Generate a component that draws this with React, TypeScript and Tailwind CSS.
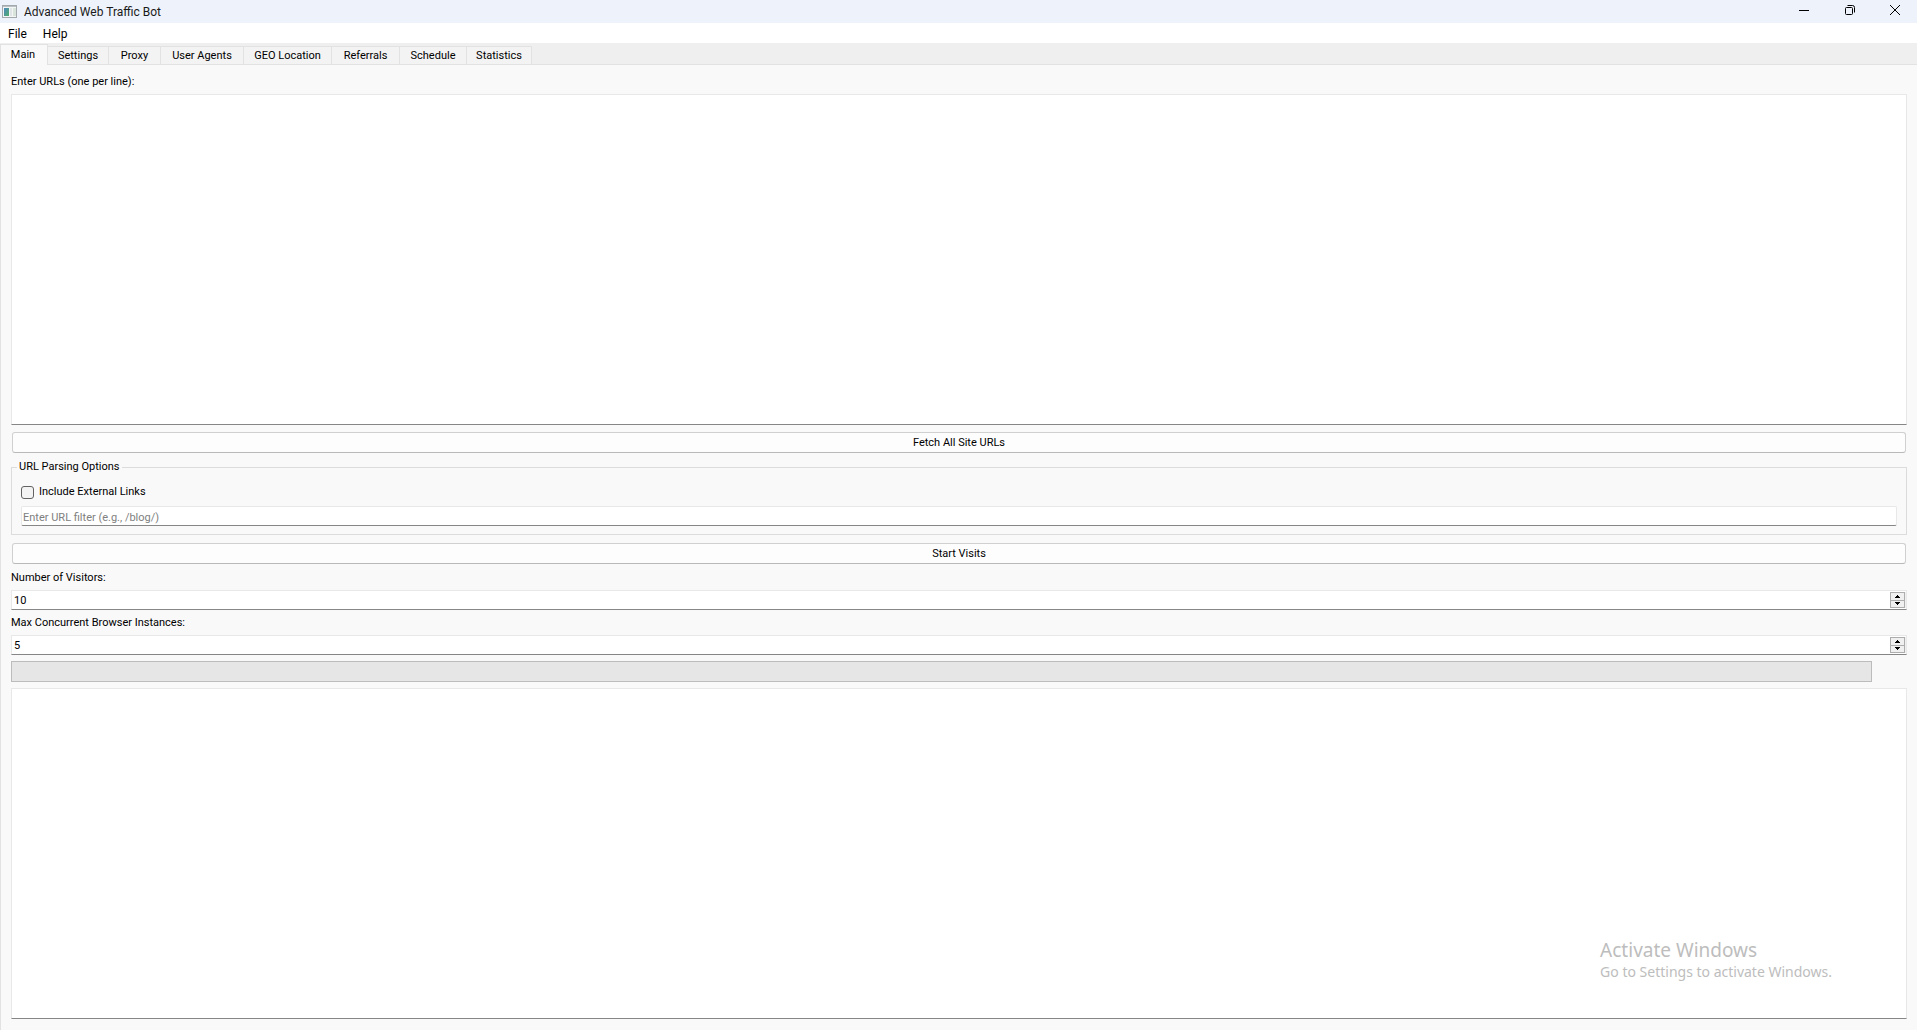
import { useState } from "react";

const TABS = [
  { name: "Main", width: "w-12" },
  { name: "Settings", width: "w-[61px]" },
  { name: "Proxy", width: "w-[52px]" },
  { name: "User Agents", width: "w-[83px]" },
  { name: "GEO Location", width: "w-[88px]" },
  { name: "Referrals", width: "w-[68px]" },
  { name: "Schedule", width: "w-[67px]" },
  { name: "Statistics", width: "w-[65px]" },
];

const fieldBorder = "border border-[#e8e8e8] border-b-[#868686] bg-white outline-none";

function TitleBar() {
  return (
    <header className="flex h-[23px] items-center bg-[#eef3fb] pl-0.5">
      <svg width="16" height="14" viewBox="0 0 16 14" className="shrink-0">
        <defs>
          <linearGradient id="appIcon" x1="0" y1="0" x2="1" y2="1">
            <stop offset="0" stopColor="#4f86c0" />
            <stop offset="1" stopColor="#4fae6b" />
          </linearGradient>
        </defs>
        <rect x="0.5" y="0.5" width="14" height="12" fill="#f4f6f6" stroke="#a3a9ad" />
        <rect x="1" y="1" width="13" height="1" fill="#b9c0c5" />
        <rect x="2" y="3" width="5" height="8" fill="url(#appIcon)" />
        <rect x="8" y="3" width="2" height="8" fill="#dfe5e6" />
        <rect x="11" y="3" width="3" height="8" fill="#d9e4dc" />
      </svg>
      <h1 className="ml-1.5 text-[12px] leading-4 text-[#1a1a1a]">Advanced Web Traffic Bot</h1>
      <div className="ml-auto flex h-full">
        <button aria-label="Minimize" className="flex w-[46px] items-center justify-center pb-1">
          <svg width="10" height="10" viewBox="0 0 10 10" shapeRendering="crispEdges">
            <path d="M0 5.5h10" stroke="#000" />
          </svg>
        </button>
        <button aria-label="Restore" className="flex w-[46px] items-center justify-center pb-1">
          <svg width="10" height="10" viewBox="0 0 10 10" fill="none" stroke="#000">
            <rect x="0.5" y="2.5" width="7" height="7" rx="1" />
            <path d="M2.5 0.5H7.5Q9.5 0.5 9.5 2.5V7.5" />
          </svg>
        </button>
        <button aria-label="Close" className="flex w-11 items-center justify-center pb-1">
          <svg width="10" height="10" viewBox="0 0 10 10" stroke="#000">
            <path d="M0 0L10 10M10 0L0 10" />
          </svg>
        </button>
      </div>
    </header>
  );
}

function MenuBar() {
  return (
    <nav className="flex h-5 items-end gap-4 bg-white pb-px pl-2 text-[12px] leading-4">
      <button>File</button>
      <button>Help</button>
    </nav>
  );
}

function SpinBox({ id, value, onChange }: { id: string; value: number; onChange: (n: number) => void }) {
  return (
    <div className={`flex h-5 ${fieldBorder}`}>
      <input
        id={id}
        type="text"
        inputMode="numeric"
        value={value}
        onChange={(e) => onChange(Number(e.target.value) || 0)}
        className="min-w-0 flex-1 px-0.5 pt-0.5 outline-none"
      />
      <div className="my-px flex w-4 flex-col bg-[#f0f0f0] pr-px">
        <button
          aria-label="Increase"
          onClick={() => onChange(value + 1)}
          className="flex flex-1 items-center justify-center border border-[#adadad]"
        >
          <svg width="5" height="3" viewBox="0 0 5 3" shapeRendering="crispEdges">
            <path d="M2 0h1v1h1v1h1v1H0V2h1V1h1z" />
          </svg>
        </button>
        <button
          aria-label="Decrease"
          onClick={() => onChange(Math.max(0, value - 1))}
          className="flex flex-1 items-center justify-center border border-t-0 border-[#adadad]"
        >
          <svg width="5" height="3" viewBox="0 0 5 3" shapeRendering="crispEdges">
            <path d="M0 0h5v1H4v1H3v1H2V2H1V1H0z" />
          </svg>
        </button>
      </div>
    </div>
  );
}

export default function App() {
  const [tab, setTab] = useState("Main");
  const [urls, setUrls] = useState("");
  const [external, setExternal] = useState(false);
  const [filter, setFilter] = useState("");
  const [visitors, setVisitors] = useState(10);
  const [instances, setInstances] = useState(5);

  const pushButton =
    "mx-px h-[21px] rounded-[3px] border border-[#d0d0d0] border-b-[#b9b9b9] bg-[#fdfdfd] leading-4";

  return (
    <div className="relative flex min-h-screen flex-col bg-[#f9f9f9] font-[Roboto,sans-serif] text-[11px] leading-4 text-black">
      <TitleBar />
      <MenuBar />

      <div role="tablist" className="flex h-[22px] items-end border-b border-[#e2e2e2] bg-[#efefef]">
        {TABS.map((t) => (
          <button
            key={t.name}
            role="tab"
            aria-selected={tab === t.name}
            onClick={() => setTab(t.name)}
            className={`${t.width} whitespace-nowrap border-t border-r border-[#e2e2e2] ${
              tab === t.name ? "-mb-px h-[21px] border-l bg-[#f9f9f9] pr-0.5 pb-px" : "h-[18px] bg-[#f3f3f3]"
            }`}
          >
            {t.name}
          </button>
        ))}
      </div>

      <main className="flex flex-1 flex-col border-l border-[#e2e2e2] px-2.5 pt-[9px] pb-[11px]">
        <label htmlFor="urls">Enter URLs (one per line):</label>
        <textarea
          id="urls"
          value={urls}
          onChange={(e) => setUrls(e.target.value)}
          className={`mt-1 min-h-20 flex-1 resize-none p-1 ${fieldBorder}`}
        />
        <button className={`mt-[7px] ${pushButton}`}>Fetch All Site URLs</button>

        <fieldset className="mt-1.5 border border-[#dcdcdc] px-[9px] pb-2">
          <legend className="-ml-1 px-0.5">URL Parsing Options</legend>
          <label className="mt-[9px] flex items-center gap-[5px]">
            <input
              type="checkbox"
              checked={external}
              onChange={(e) => setExternal(e.target.checked)}
              className="size-[13px] appearance-none rounded-[3px] border border-[#626262] bg-[#f3f3f3] checked:bg-[#0067c0]"
            />
            Include External Links
          </label>
          <input
            type="text"
            aria-label="URL filter"
            value={filter}
            onChange={(e) => setFilter(e.target.value)}
            placeholder="Enter URL filter (e.g., /blog/)"
            className={`mt-1.5 block h-5 w-full rounded-[2px] px-px pt-0.5 placeholder:text-[#808080] ${fieldBorder}`}
          />
        </fieldset>

        <button className={`mt-2 ${pushButton}`}>Start Visits</button>

        <label htmlFor="visitors" className="mt-1.5">Number of Visitors:</label>
        <div className="mt-1">
          <SpinBox id="visitors" value={visitors} onChange={setVisitors} />
        </div>
        <label htmlFor="instances" className="mt-[5px]">Max Concurrent Browser Instances:</label>
        <div className="mt-1">
          <SpinBox id="instances" value={instances} onChange={setInstances} />
        </div>

        <div
          role="progressbar"
          aria-label="Visit progress"
          className="mt-1.5 mr-[35px] h-[21px] border border-[#bcbcbc] bg-[#e6e6e6]"
        />
        <textarea
          readOnly
          aria-label="Log"
          className={`mt-1.5 min-h-20 flex-1 resize-none p-1 ${fieldBorder}`}
        />
      </main>

      {/* system watermark floats over the log */}
      <div className="pointer-events-none absolute right-[85px] bottom-12 font-['Noto_Sans',sans-serif] text-[#bdbdbd]">
        <p className="text-[19px] leading-6">Activate Windows</p>
        <p className="text-[14px] leading-5">Go to Settings to activate Windows.</p>
      </div>
    </div>
  );
}
